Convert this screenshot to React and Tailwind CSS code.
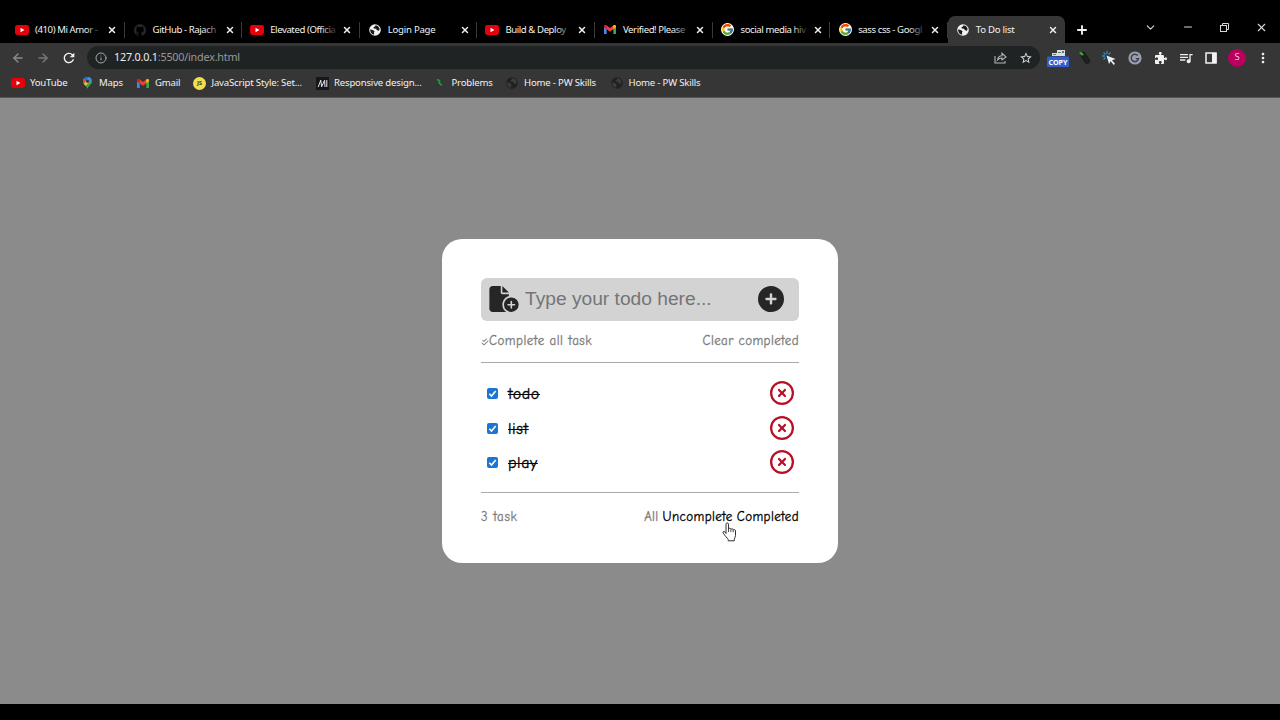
import { useState } from 'react'
import { FaCheckDouble, FaCirclePlus, FaFileCirclePlus, FaPuzzlePiece, FaRegCircleXmark } from 'react-icons/fa6'
import { FcGoogle } from 'react-icons/fc'
import { MdOutlineQueueMusic, MdMoreVert, MdRefresh, MdStarOutline } from 'react-icons/md'
import { SiGithub } from 'react-icons/si'
import { ArrowLeft, ArrowRight, ChevronDown, Info, Minus, Plus, X } from 'lucide-react'

// Favicons
const YoutubeIcon = () => (
  <svg width="14" height="10" viewBox="0 0 14 10">
    <rect width="14" height="10" rx="2.4" fill="#e6000c" />
    <path d="M5.5 2.8v4.4L9.4 5z" fill="#fff" />
  </svg>
)

const GmailIcon = () => (
  <svg width="12" height="9" viewBox="0 0 12 9">
    <path d="M0 1.5V9h2.7V3.5z" fill="#4285f4" />
    <path d="M9.3 3.5V9H12V1.5z" fill="#34a853" />
    <path d="M0 1.6C0 0 1.6-.4 2.7.5L6 3 9.3.5C10.4-.4 12 0 12 1.6v.6L6 6.7 0 2.2z" fill="#ea4335" />
    <path d="M9.3.5C10.4-.4 12 0 12 1.6v.6L9.3 4.2z" fill="#fbbc04" />
    <path d="M2.7.5C1.6-.4 0 0 0 1.6v.6l2.7 2z" fill="#c5221f" />
  </svg>
)

const GlobeIcon = ({ dark }) => (
  <svg width="12" height="12" viewBox="0 0 12 12">
    <circle cx="6" cy="6" r="5.8" fill={dark ? '#202122' : '#f1f1f1'} />
    <path
      d="M1.2 5.2 4.2 6.3 5.6 7.3 5 8.6 5.2 10.6C3 10.5 1 8.5 1.2 5.2zM6.5 1.2 6 2.6 4.5 3.2 4.8 4.5 7 4.8 8 6.3 10 6.8 10.6 5C10.3 3 8.8 1.4 6.5 1.2z"
      fill={dark ? '#3c3d3e' : '#1b1b1b'}
    />
  </svg>
)

const MapsIcon = () => (
  <svg width="9" height="12" viewBox="0 0 9 12">
    <path d="M4.5 12C4 9 0 7.5 0 4.3A4.5 4.5 0 0 1 9 4.3C9 7.5 5 9 4.5 12z" fill="#34a853" />
    <path d="M1 1.6A4.5 4.5 0 0 1 5.8.2L3 4z" fill="#1a73e8" />
    <path d="M1 1.6 3 4 .8 6.7A4.5 4.5 0 0 1 1 1.6z" fill="#ea4335" />
    <path d="M5.8.2A4.5 4.5 0 0 1 8.6 2.5L2.7 8.9.8 6.7z" fill="#4285f4" />
    <path d="M.8 6.7 3 4 6 5.3 2.7 8.9z" fill="#fbbc04" />
    <circle cx="4.5" cy="4.3" r="1.5" fill="#303134" />
  </svg>
)

const JsIcon = () => (
  <span className="flex h-[13px] w-[13px] items-center justify-center rounded-full bg-[#f2de55] text-[6px] font-bold text-[#3b3820]">
    JS
  </span>
)

const MdnIcon = () => (
  <svg width="13" height="13" viewBox="0 0 13 13">
    <rect width="13" height="13" fill="#15171c" />
    <path d="M2.2 10 4.8 3.2 5.6 9.8 8.6 3.2 9 10M10.8 3v7" fill="none" stroke="#e8e8e8" strokeWidth="1" />
  </svg>
)

const ProblemsIcon = () => (
  <svg width="12" height="12" viewBox="0 0 12 12">
    <path d="M3 2.5 5.5 3.5l-.5 2.2L7.8 8.5" fill="none" stroke="#1f9a38" strokeWidth="1.7" />
  </svg>
)

const tabs = [
  { title: '(410) Mi Amor -', icon: <YoutubeIcon /> },
  { title: 'GitHub - Rajach', icon: <SiGithub size={12} color="#25282b" /> },
  { title: 'Elevated (Officia', icon: <YoutubeIcon /> },
  { title: 'Login Page', icon: <GlobeIcon />, short: true },
  { title: 'Build & Deploy', icon: <YoutubeIcon /> },
  { title: 'Verified! Please', icon: <GmailIcon /> },
  { title: 'social media hiv', icon: <FcGoogle size={13} className="rounded-full bg-white" /> },
  { title: 'sass css - Googl', icon: <FcGoogle size={13} className="rounded-full bg-white" /> },
  { title: 'To Do list', icon: <GlobeIcon />, active: true, short: true }
]

const bookmarks = [
  { title: 'YouTube', icon: <YoutubeIcon />, width: 'w-[69px]' },
  { title: 'Maps', icon: <MapsIcon />, width: 'w-[56px]' },
  { title: 'Gmail', icon: <GmailIcon />, width: 'w-[56.5px]' },
  { title: 'JavaScript Style: Set...', icon: <JsIcon />, width: 'w-[122.5px]' },
  { title: 'Responsive design...', icon: <MdnIcon />, width: 'w-[117.5px]' },
  { title: 'Problems', icon: <ProblemsIcon />, width: 'w-[72.5px]' },
  { title: 'Home - PW Skills', icon: <GlobeIcon dark />, width: 'w-[104.5px]' },
  { title: 'Home - PW Skills', icon: <GlobeIcon dark />, width: 'w-[104px]' }
]

const Tab = ({ title, icon, active, short }) => (
  <div
    className={`relative flex h-[27px] w-[117.6px] shrink-0 items-center pl-[8px] text-[9.6px] ${
      active ? 'rounded-t-[7px] bg-[#363636]' : 'bg-black'
    }`}
  >
    <span className="flex w-[14px] justify-center">{icon}</span>
    <span
      className={`relative ml-[6px] mt-px w-[70px] whitespace-nowrap text-[#f2f2f2] ${
        short ? 'tracking-[-0.25px]' : 'tracking-[-0.42px]'
      }`}
    >
      {title}
      {!short && (
        <span className="absolute inset-y-0 right-[4px] w-[16px] bg-linear-to-r from-transparent to-black/85" />
      )}
    </span>
    <X size={10} strokeWidth={3.6} className="ml-[2px] mt-px text-[#f0f0f0]" />
    {!active && <span className="absolute right-0 top-[6px] h-[16px] w-px bg-[#3a3a3a]" />}
  </div>
)

const TabStrip = () => (
  <div className="flex h-[43px] bg-black pl-[7px] pt-[16px]">
    {tabs.map((tab, i) => (
      <Tab key={i} {...tab} />
    ))}
    <Plus size={14} strokeWidth={3.2} className="ml-[10px] mt-[7px] text-[#f0f0f0]" />
    <div className="ml-auto flex items-start pr-[12px] pt-[5px] text-[#d8d8d8]">
      <ChevronDown size={13} strokeWidth={2} className="mr-[25px]" />
      <Minus size={12} strokeWidth={2} className="mr-[24px]" />
      <svg width="12" height="13" viewBox="0 0 12 13" fill="none" stroke="currentColor" className="mr-[25px]">
        <rect x="2.5" y="4.5" width="6" height="6" />
        <path d="M4.5 4.5V2.5h6v6H8.5" />
      </svg>
      <X size={13} strokeWidth={2} />
    </div>
  </div>
)

const Extensions = () => (
  <div className="flex items-center">
    <div className="ml-[7px] mt-px w-[22px]">
      <svg width="22" height="18" viewBox="0 0 22 18">
        <path d="M5 7V4h5V1h8v6z" fill="#d9dde0" />
        <path d="M11 3h3v1h-3zM15 2h2v2h-2zM6 5h3v1H6z" fill="#607a75" />
        <rect y="7.5" width="22" height="10.5" rx="1" fill="#2f5fd0" />
        <text x="11" y="15.5" textAnchor="middle" fontSize="7.2" fontWeight="700" fill="#fff" fontFamily="Noto Sans">
          COPY
        </text>
      </svg>
    </div>
    <svg width="14" height="16" viewBox="0 0 14 16" className="ml-[8px]">
      <path d="M4 3 7 2l5.5 8c1 2-2 5-4 3L4 6z" fill="#202020" stroke="#181818" />
      <path d="M2 2.5 4.5 2 7 5 4.5 5.5z" fill="#35b82d" />
    </svg>
    <svg width="15" height="15" viewBox="0 0 15 15" className="ml-[11px] mt-px">
      <path d="M5 0v3M0 5h3M1.5 1.5l2 2M8.5 1.5l-2 2M1.5 8.5l2-2" stroke="#2f8fc2" strokeWidth="1.3" />
      <path d="M4.5 4.5 13.5 8 10 9.2l3 3.6-1.3 1.2-3-3.7L7 13z" fill="#e8eef2" />
    </svg>
    <svg width="14" height="14" viewBox="0 0 14 14" className="ml-[11px]">
      <circle cx="7" cy="7" r="6.6" fill="#9a9eac" />
      <path d="M9.8 4.5A3.7 3.7 0 1 0 10.6 7.6H7.8" fill="none" stroke="#3a3c48" strokeWidth="1.4" />
    </svg>
    <FaPuzzlePiece size={12} className="ml-[13px] text-[#f2f2f2]" />
    <MdOutlineQueueMusic size={16} className="ml-[11px] text-[#f0f0f0]" />
    <svg width="12" height="12" viewBox="0 0 12 12" className="ml-[11px]">
      <rect x="1" y="1" width="10" height="10" fill="none" stroke="#f2f2f2" strokeWidth="1.5" />
      <rect x="7" y="1" width="4.5" height="10" fill="#f2f2f2" />
    </svg>
    <span className="ml-[11px] flex h-[18px] w-[18px] items-center justify-center rounded-full bg-[#b8005c] text-[9.5px] text-[#f3c6dd]">
      S
    </span>
    <MdMoreVert size={16} className="ml-[9px] text-[#f0f0f0]" />
  </div>
)

const Toolbar = () => (
  <div className="flex h-[29px] items-center pl-[11px]">
    <ArrowLeft size={14} strokeWidth={2.4} className="text-[#8b8b8b]" />
    <ArrowRight size={14} strokeWidth={2.4} className="ml-[11px] text-[#777]" />
    <MdRefresh size={16} className="ml-[11px] text-[#f2f2f2]" />
    <div className="ml-[10px] flex h-[23px] w-[953px] items-center rounded-full bg-[#202324] pl-[8px] pr-[7px]">
      <Info size={12} className="text-[#a5a8aa]" />
      <span className="ml-[7px] text-[10.8px] tracking-[-0.22px] text-[#96999b]">
        <span className="text-[#eee]">127.0.0.1</span>:5500/index.html
      </span>
      <svg
        width="13"
        height="12"
        viewBox="0 0 13 12"
        fill="none"
        stroke="#b5b8ba"
        strokeWidth="1.1"
        className="ml-auto"
      >
        <path d="M1 4v7h10V9" />
        <path d="M3.5 8C4 5 5.5 3.8 8 3.7V1.2L12 5 8 8V6C6 6 4.8 6.5 3.5 8z" />
      </svg>
      <MdStarOutline size={14} className="ml-[12px] text-[#d8dadb]" />
    </div>
    <Extensions />
  </div>
)

const BookmarksBar = () => (
  <div className="flex h-[26px] items-center border-b border-[#565656] pb-[2px] pl-[11px] text-[9.6px] text-[#f2f2f2]">
    {bookmarks.map((b, i) => (
      <div key={i} className={`flex shrink-0 items-center whitespace-nowrap tracking-[-0.19px] ${b.width}`}>
        <span className="mr-[5px] flex w-[14px] shrink-0 justify-center">{b.icon}</span>
        <span>{b.title}</span>
      </div>
    ))}
  </div>
)

const Checkbox = ({ checked, onChange }) => (
  <button
    onClick={onChange}
    className={`mt-px flex h-[11px] w-[11px] items-center justify-center rounded-[2px] ${
      checked ? 'bg-[#1976d2]' : 'border border-gray-500 bg-white'
    }`}
  >
    {checked && (
      <svg width="9" height="9" viewBox="0 0 9 9" fill="none" stroke="#fff" strokeWidth="1.6">
        <path d="M1.3 4.8 3.5 7 7.7 1.9" />
      </svg>
    )}
  </button>
)

const HandCursor = () => (
  <svg width="15" height="20" viewBox="0 0 15 20" className="absolute left-[280px] top-[283px]">
    <path
      d="M4 11.5V2.2C4 .4 6.5.4 6.5 2.2V7c.2-1.1 2.3-1 2.4.3.4-1 2.2-.7 2.3.6.5-.8 2.3-.5 2.3 1v4.5c0 1.5-1 2.2-1.2 4v1.4H6.2v-1.2C5.5 16 3 14 1.2 11.2.3 9.6 2 8.8 3 10z"
      fill="#fff"
      stroke="#333"
      strokeWidth="1"
      strokeLinejoin="round"
    />
    <path d="M6.5 7v3M8.9 7.5V10M11.2 8v2.3" stroke="#333" strokeWidth=".9" />
  </svg>
)

const TodoCard = () => {
  const [text, setText] = useState('')
  const [tasks, setTasks] = useState([
    { id: 1, name: 'todo', done: true },
    { id: 2, name: 'list', done: true },
    { id: 3, name: 'play', done: true }
  ])

  const addTask = () => {
    if (!text.trim()) return
    setTasks([...tasks, { id: Date.now(), name: text, done: false }])
    setText('')
  }

  const toggleTask = (id) => setTasks(tasks.map((t) => (t.id === id ? { ...t, done: !t.done } : t)))

  return (
    <div className="relative mt-[141px] h-[324px] w-[396px] rounded-[20px] bg-white px-[39px] pt-[39px] font-['Comic_Sans_MS','Comic_Neue','Noto_Sans',sans-serif]">
      {/* Input */}
      <div className="flex h-[43px] items-center rounded-[6px] bg-[#d3d3d3] pb-px pl-[8px] pr-[15px]">
        <FaFileCirclePlus size={26} className="h-[26px] w-[30px] shrink-0 text-[#262626]" />
        <input
          value={text}
          onChange={(e) => setText(e.target.value)}
          placeholder="Type your todo here..."
          className="ml-[6px] mt-px min-w-0 flex-1 font-['Liberation_Sans',Arial,sans-serif] text-[19.2px] outline-none placeholder:text-[#757575]"
        />
        <button onClick={addTask}>
          <FaCirclePlus size={26} className="text-[#262626]" />
        </button>
      </div>

      {/* Bulk actions */}
      <div className="flex h-[42px] items-center justify-between border-b border-[#a9a9a9] pb-[2px] text-[13px] text-[#7c7c7c] [-webkit-text-stroke:0.3px]">
        <button
          className="flex items-center tracking-[0.5px]"
          onClick={() => setTasks(tasks.map((t) => ({ ...t, done: true })))}
        >
          <FaCheckDouble size={8} className="mt-[2px]" />
          Complete all task
        </button>
        <button className="tracking-[0.4px]" onClick={() => setTasks(tasks.filter((t) => !t.done))}>
          Clear completed
        </button>
      </div>

      {/* Tasks */}
      <ul className="h-[130px] border-b border-[#a9a9a9] pt-[13px]">
        {tasks.map((task) => (
          <li key={task.id} className="flex h-[34.4px] items-center pl-[6px] pr-[5px]">
            <Checkbox checked={task.done} onChange={() => toggleTask(task.id)} />
            <span
              className={`ml-[10px] mt-[2px] text-[16px] tracking-[0.6px] text-black [-webkit-text-stroke:0.3px] ${
                task.done ? 'line-through' : ''
              }`}
            >
              {task.name}
            </span>
            <button className="ml-auto" onClick={() => setTasks(tasks.filter((t) => t.id !== task.id))}>
              <FaRegCircleXmark size={24} className="text-[#b90f24]" />
            </button>
          </li>
        ))}
      </ul>

      {/* Filters */}
      <div className="flex h-[47px] items-center justify-between text-[13px] text-[#7c7c7c] [-webkit-text-stroke:0.3px]">
        <span className="tracking-[0.6px]">{tasks.length} task</span>
        <div className="flex gap-[4px]">
          <button className="tracking-[0.4px]">All</button>
          <button className="tracking-[0.4px] text-black">Uncomplete</button>
          <button className="tracking-[0.4px] text-black">Completed</button>
        </div>
      </div>

      <HandCursor />
    </div>
  )
}

const App = () => (
  <div className="flex h-[720px] w-[1280px] flex-col overflow-hidden bg-black font-['Noto_Sans','Open_Sans',sans-serif]">
    <TabStrip />
    <div className="bg-[#363636]">
      <Toolbar />
      <BookmarksBar />
    </div>
    <main className="flex h-[606px] justify-center bg-[#8b8b8b]">
      <TodoCard />
    </main>
  </div>
)

export default App
